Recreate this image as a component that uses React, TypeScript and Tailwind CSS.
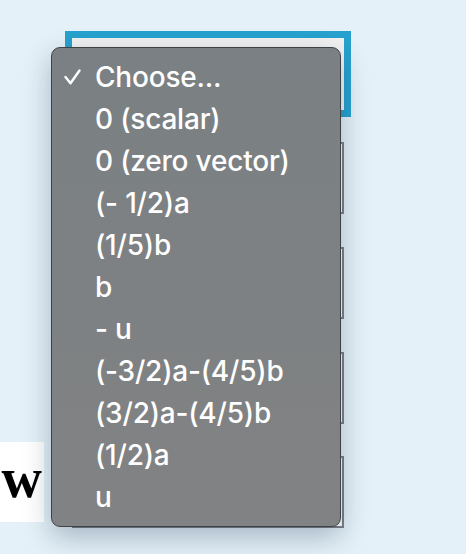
const options = [
  'Choose...',
  '0 (scalar)',
  '0 (zero vector)',
  '(- 1/2)a',
  '(1/5)b',
  'b',
  '- u',
  '(-3/2)a-(4/5)b',
  '(3/2)a-(4/5)b',
  '(1/2)a',
  'u',
]

function Check() {
  return (
    <svg width="17" height="16" viewBox="0 0 17 16" className="shrink-0">
      <polyline
        points="1.5,8 6.5,14.2 15.5,1.5"
        fill="none"
        stroke="white"
        strokeWidth="2.4"
        strokeLinecap="round"
        strokeLinejoin="round"
      />
    </svg>
  )
}

export default function App() {
  return (
    <div className="relative min-h-[554px] w-full overflow-hidden bg-[#e4f1f8]">
      {/* form column */}
      <div className="pt-[31px]">
        <div className="ml-[65px] w-[286px] border-[7px] border-[#27a2ce] shadow-[inset_0_0_0_1px_#45c4ec]">
          <div className="h-[72px] bg-[#f2f2f2]" />
        </div>

        <div className="ml-[72px] mt-[25px] flex flex-col gap-[33px]">
          <div className="h-[72px] w-[272px] border-2 border-[#7d8187] bg-white" />
          <div className="h-[72px] w-[272px] border-2 border-[#7d8187] bg-white" />
          <div className="h-[72px] w-[272px] border-2 border-[#7d8187] bg-white" />
        </div>

        <div className="mt-[32px] flex items-start">
          <div className="-mt-[14px] flex h-[80px] w-[44px] items-center justify-end overflow-hidden bg-white pr-[2px]">
            <span className="font-['Liberation_Serif',serif] text-[56px] font-bold leading-none text-black -mt-[8px]">w</span>
          </div>
          <div className="ml-[28px] h-[72px] w-[272px] border-2 border-[#7d8187] bg-white" />
        </div>
      </div>

      {/* open dropdown menu */}
      <div className="absolute left-[51px] top-[47px] w-[290px] rounded-[9px] border border-[#3f4244] bg-gradient-to-b from-[#7a8083] to-[#818283] py-[8px] shadow-[0_10px_28px_rgba(0,30,60,0.28)]">
        {options.map((opt, i) => (
          <div
            key={opt}
            className="flex h-[42px] items-center font-['Inter','Liberation_Sans',sans-serif] text-[28px] font-medium leading-none tracking-[-0.2px] text-white"
          >
            <div className="flex w-[43px] justify-end pr-[14px]">{i === 0 && <Check />}</div>
            <span>{opt}</span>
          </div>
        ))}
      </div>
    </div>
  )
}
